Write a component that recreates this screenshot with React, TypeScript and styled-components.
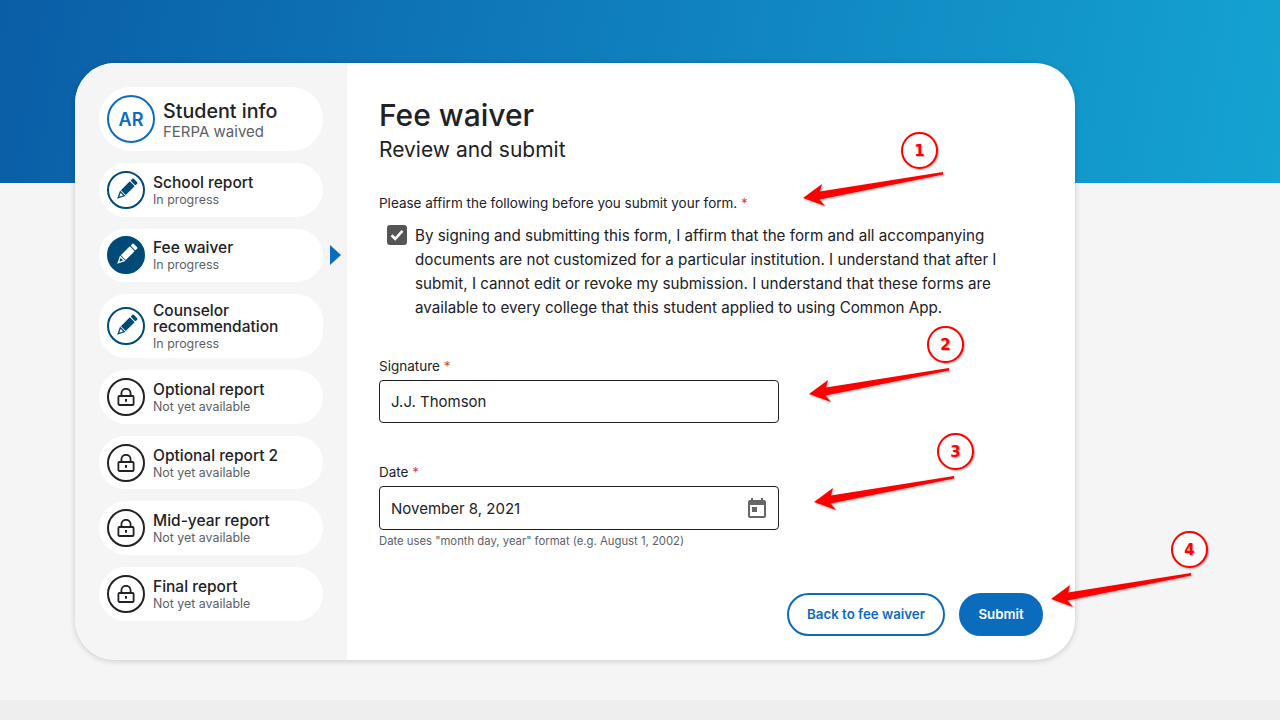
import React from "react";
import styled, { createGlobalStyle } from "styled-components";

const FONT = `Inter, "Noto Sans", "Liberation Sans", sans-serif`;

const GlobalStyle = createGlobalStyle`
  html, body {
    margin: 0;
    padding: 0;
    background: #f5f5f5;
  }
  * {
    box-sizing: border-box;
  }
  body {
    font-family: ${FONT};
    color: #212126;
  }
`;

const steps = [
  { title: "School report", status: "In progress", icon: "pencil" },
  { title: "Fee waiver", status: "In progress", icon: "pencil", active: true },
  { title: "Counselor recommendation", status: "In progress", icon: "pencil", tall: true },
  { title: "Optional report", status: "Not yet available", icon: "lock" },
  { title: "Optional report 2", status: "Not yet available", icon: "lock" },
  { title: "Mid-year report", status: "Not yet available", icon: "lock" },
  { title: "Final report", status: "Not yet available", icon: "lock" },
];

const callouts = [
  { n: 1, cx: 919, cy: 150, dx: 0, dy: 0 },
  { n: 2, cx: 945, cy: 344, dx: 6, dy: 196 },
  { n: 3, cx: 955, cy: 451, dx: 11, dy: 304 },
  { n: 4, cx: 1189, cy: 549, dx: 248, dy: 401 },
];

function PencilIcon() {
  return (
    <svg width="24" height="24" viewBox="0 0 24 24" fill="currentColor">
      <g transform="rotate(45 12 12)">
        <rect x="8.6" y="-1.4" width="6.8" height="3.6" rx="1" />
        <rect x="8.6" y="3.2" width="6.8" height="12.6" />
        <path d="M9.2 17.2 h5.6 L12 23 z" fill="none" stroke="currentColor" strokeWidth="1.3" />
      </g>
    </svg>
  );
}

function LockIcon() {
  return (
    <svg width="18" height="18" viewBox="0 0 18 18" fill="none" stroke="currentColor" strokeWidth="1.8">
      <rect x="1.4" y="8" width="15.2" height="9" rx="1" />
      <path d="M4.4 8 V5.4 a4.6 4.6 0 0 1 9.2 0 V8" />
      <path d="M9 11 v2.8" strokeWidth="2" />
    </svg>
  );
}

function CalendarIcon() {
  return (
    <svg width="20" height="22" viewBox="0 0 20 22" fill="#666">
      <path d="M4 1 h2 v2 h8 v-2 h2 v2 h1 a2 2 0 0 1 2 2 v14 a2 2 0 0 1 -2 2 h-14 a2 2 0 0 1 -2 -2 v-14 a2 2 0 0 1 2 -2 h1 z M3 8 v11 h14 v-11 z" />
      <rect x="5" y="10" width="5" height="5" />
    </svg>
  );
}

function CheckIcon() {
  return (
    <svg width="14" height="12" viewBox="0 0 14 12" fill="none" stroke="#fff" strokeWidth="2.6">
      <path d="M1.5 6.2 L5.2 9.8 L12.5 1.8" />
    </svg>
  );
}

function Arrow({ dx, dy }: { dx: number; dy: number }) {
  return (
    <ArrowShape width="1280" height="720" viewBox="0 0 1280 720">
      <polygon
        transform={`translate(${dx} ${dy})`}
        points="943,172 820,191.5 822,184 803,198 825,206 819.5,199.5 943,174.5"
        fill="#ff0000"
      />
    </ArrowShape>
  );
}

export default function App() {
  return (
    <Page>
      <GlobalStyle />
      <Card>
        <Sidebar>
          <StudentPill>
            <Avatar>AR</Avatar>
            <StudentText>
              <StudentName>Student info</StudentName>
              <StudentNote>FERPA waived</StudentNote>
            </StudentText>
          </StudentPill>
          {steps.map((step) => (
            <StepPill key={step.title} $tall={step.tall} $active={step.active}>
              <StepIcon $kind={step.icon} $active={step.active}>
                {step.icon === "pencil" ? <PencilIcon /> : <LockIcon />}
              </StepIcon>
              <PillText>
                <StepTitle>{step.title}</StepTitle>
                <StepStatus>{step.status}</StepStatus>
              </PillText>
            </StepPill>
          ))}
        </Sidebar>
        <Main>
          <Title>Fee waiver</Title>
          <Subtitle>Review and submit</Subtitle>
          <Affirm>
            Please affirm the following before you submit your form. <Req>*</Req>
          </Affirm>
          <CheckRow>
            <CheckBox>
              <CheckIcon />
            </CheckBox>
            <CheckText>
              By signing and submitting this form, I affirm that the form and all accompanying
              documents are not customized for a particular institution. I understand that after I
              submit, I cannot edit or revoke my submission. I understand that these forms are
              available to every college that this student applied to using Common App.
            </CheckText>
          </CheckRow>
          <SignatureField>
            <Label>
              Signature <Req>*</Req>
            </Label>
            <Input>J.J. Thomson</Input>
          </SignatureField>
          <DateField>
            <Label>
              Date <Req>*</Req>
            </Label>
            <DateInput>
              <DateValue>November 8, 2021</DateValue>
              <CalendarIcon />
            </DateInput>
            <Hint>Date uses "month day, year" format (e.g. August 1, 2002)</Hint>
          </DateField>
          <Actions>
            <GhostButton>Back to fee waiver</GhostButton>
            <PrimaryButton>Submit</PrimaryButton>
          </Actions>
        </Main>
      </Card>
      <Footer />
      {callouts.map((c) => (
        <React.Fragment key={c.n}>
          <Badge $cx={c.cx} $cy={c.cy}>
            {c.n}
          </Badge>
          <Arrow dx={c.dx} dy={c.dy} />
        </React.Fragment>
      ))}
    </Page>
  );
}

const Page = styled.div`
  position: relative;
  width: 1280px;
  height: 720px;
  overflow: hidden;
  padding-top: 63px;
  display: flex;
  flex-direction: column;
  background:
    linear-gradient(100deg, #0a5ea6 0%, #1080bd 50%, #14a3d2 100%) top / 100% 183px no-repeat,
    #f5f5f5;
`;

const Card = styled.div`
  width: 1000px;
  height: 597px;
  margin-left: 75px;
  display: flex;
  border-radius: 40px;
  overflow: hidden;
  background: #fff;
  box-shadow: 0 1px 6px rgba(0, 0, 0, 0.18);
`;

const Sidebar = styled.nav`
  width: 272px;
  flex-shrink: 0;
  padding: 24px 24px 0;
  display: flex;
  flex-direction: column;
  gap: 12px;
  background: #f5f5f5;
`;

const StudentPill = styled.div`
  height: 64px;
  padding-left: 8px;
  display: flex;
  align-items: center;
  gap: 8px;
  border-radius: 32px;
  background: #fff;
`;

const Avatar = styled.div`
  width: 48px;
  height: 48px;
  flex-shrink: 0;
  display: flex;
  align-items: center;
  justify-content: center;
  border: 2px solid #0b6bbd;
  border-radius: 50%;
  color: #0b6bbd;
  font-size: 18px;
  font-weight: 600;
`;

const PillText = styled.div`
  padding-top: 3px;
  display: flex;
  flex-direction: column;
`;

const StudentText = styled(PillText)`
  padding-top: 0;
`;

const StudentName = styled.div`
  font-size: 19.7px;
  font-weight: 500;
  line-height: 24px;
`;

const StudentNote = styled.div`
  font-size: 15px;
  line-height: 17px;
  color: #5c5f66;
`;

const StepPill = styled.div<{ $tall?: boolean; $active?: boolean }>`
  position: relative;
  height: ${(p) => (p.$tall ? "64px" : "53.6px")};
  padding-left: 8px;
  display: flex;
  align-items: center;
  gap: 8px;
  border-radius: 27px;
  background: #fff;

  ${(p) =>
    p.$active &&
    `
    &::after {
      content: "";
      position: absolute;
      right: -18px;
      top: 16px;
      border-style: solid;
      border-width: 10px 0 10px 11px;
      border-color: transparent transparent transparent #0b6bbd;
    }
  `}
`;

const StepIcon = styled.div<{ $kind: string; $active?: boolean }>`
  width: 38px;
  height: 38px;
  flex-shrink: 0;
  display: flex;
  align-items: center;
  justify-content: center;
  border-radius: 50%;
  border: 2px solid ${(p) => (p.$kind === "lock" ? "#212126" : "#004a78")};
  color: ${(p) => (p.$active ? "#fff" : p.$kind === "lock" ? "#212126" : "#004a78")};
  background: ${(p) => (p.$active ? "#004a78" : "transparent")};
`;

const StepTitle = styled.div`
  font-size: 15.5px;
  font-weight: 500;
  line-height: 16px;
  color: #212126;
`;

const StepStatus = styled.div`
  font-size: 12.4px;
  line-height: 17px;
  color: #5c5f66;
`;

const Main = styled.main`
  flex: 1;
  padding: 32px 32px 0;
  display: flex;
  flex-direction: column;
`;

const Title = styled.h1`
  margin: 0;
  font-size: 30px;
  font-weight: 500;
  line-height: 40px;
  color: #212126;
`;

const Subtitle = styled.h2`
  margin: 0;
  font-size: 21px;
  font-weight: 400;
  line-height: 30px;
  color: #212126;
`;

const Affirm = styled.p`
  margin: 29px 0 0;
  font-size: 13.5px;
  line-height: 18px;
`;

const Req = styled.span`
  color: #d9473f;
`;

const CheckRow = styled.div`
  margin-top: 12px;
  padding-left: 8px;
  display: flex;
  gap: 8px;
`;

const CheckBox = styled.div`
  width: 20px;
  height: 20px;
  margin-top: 1px;
  flex-shrink: 0;
  display: flex;
  align-items: center;
  justify-content: center;
  border-radius: 3px;
  background: #555;
`;

const CheckText = styled.p`
  margin: 0;
  width: 600px;
  font-size: 15.2px;
  line-height: 24px;
`;

const SignatureField = styled.div`
  margin-top: 37px;
`;

const DateField = styled.div`
  margin-top: 40px;
`;

const Label = styled.div`
  font-size: 13.5px;
  line-height: 18px;
  margin-bottom: 4.5px;
`;

const Input = styled.div`
  width: 400px;
  height: 43.5px;
  padding: 0 11px;
  display: flex;
  align-items: center;
  justify-content: space-between;
  border: 1px solid #212126;
  border-radius: 4px;
  font-size: 15px;
`;

const DateInput = styled(Input)`
  height: 44px;
`;

const DateValue = styled.span`
  padding-top: 2px;
`;

const Hint = styled.div`
  margin-top: 4px;
  font-size: 11.3px;
  line-height: 15px;
  color: #5c5f66;
`;

const Actions = styled.div`
  margin-top: 44px;
  display: flex;
  justify-content: flex-end;
  gap: 14px;
`;

const GhostButton = styled.button`
  width: 158px;
  height: 43px;
  padding: 0;
  border: 2px solid #0b6bbd;
  border-radius: 22px;
  background: #fff;
  color: #0b6bbd;
  font-family: ${FONT};
  font-size: 13.3px;
  font-weight: 600;
`;

const PrimaryButton = styled(GhostButton)`
  width: 84px;
  background: #0b6bbd;
  color: #fff;
`;

const Footer = styled.footer`
  margin-top: 40px;
  width: 100%;
  height: 20px;
  background: #eeeeee;
`;

const Badge = styled.div<{ $cx: number; $cy: number }>`
  position: absolute;
  left: ${(p) => p.$cx - 18}px;
  top: ${(p) => p.$cy - 18}px;
  width: 37px;
  height: 37px;
  display: flex;
  align-items: center;
  justify-content: center;
  border: 2px solid #f00;
  border-radius: 50%;
  background: #fff;
  color: #f00;
  font-family: "DejaVu Sans", sans-serif;
  font-size: 15px;
  font-weight: 700;
  box-shadow: 1px 1px 2px rgba(0, 0, 0, 0.35);
  text-shadow: 1px 1px 1px rgba(0, 0, 0, 0.3);
`;

const ArrowShape = styled.svg`
  position: absolute;
  left: 0;
  top: 0;
  pointer-events: none;
  filter: drop-shadow(1px 1.5px 1px rgba(0, 0, 0, 0.35));
`;
